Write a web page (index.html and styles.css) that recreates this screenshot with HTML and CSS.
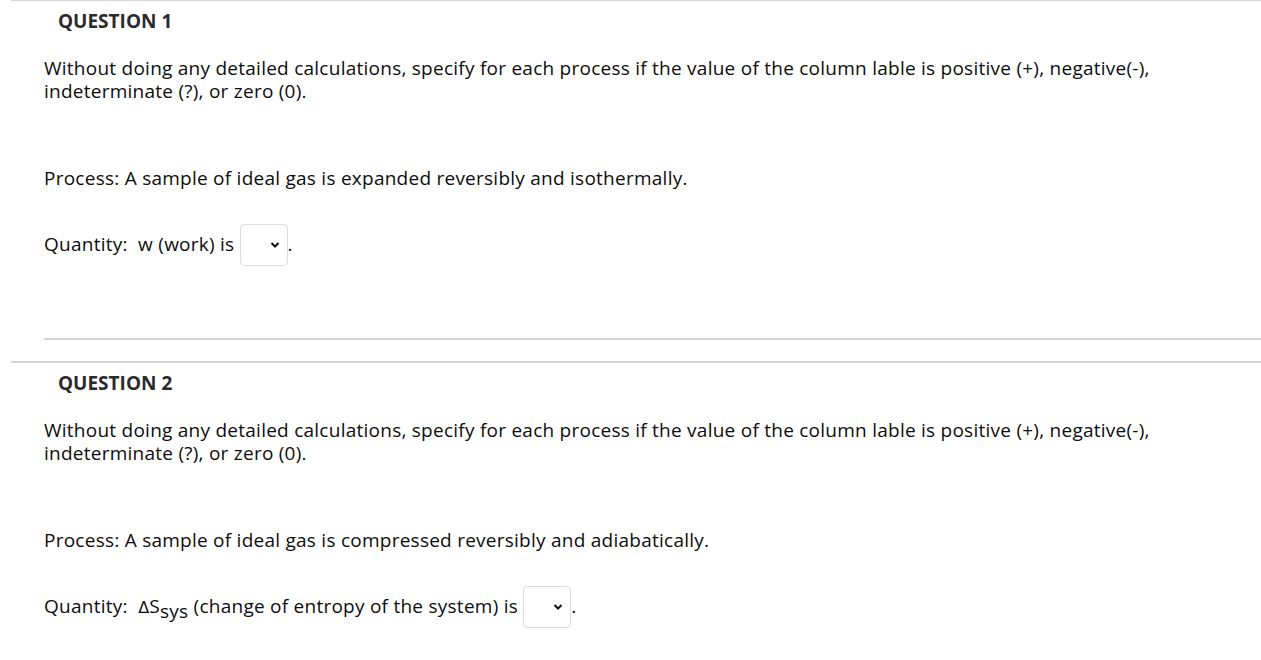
FILE: index.html
```html
<!DOCTYPE html>
<html lang="en">
<head>
<meta charset="utf-8">
<title>Questions</title>
<link rel="stylesheet" href="styles.css">
</head>
<body>
<div class="questions">
  <section class="question">
    <h2 class="q-title">QUESTION 1</h2>
    <div class="q-body">
      <p class="prompt">Without doing any detailed calculations, specify for each process if the value of the column lable is positive (+), negative(-), indeterminate (?), or zero (0).</p>
      <p class="process">Process: A sample of ideal gas is expanded reversibly and isothermally.</p>
      <p class="quantity">Quantity:&nbsp; w (work) is <span class="select"><svg width="10" height="8" viewBox="0 0 10 8"><path d="M1.5 2 L5 5.5 L8.5 2" fill="none" stroke="#111" stroke-width="2"/></svg></span>.</p>
    </div>
    <hr class="q-rule">
  </section>
  <section class="question">
    <h2 class="q-title">QUESTION 2</h2>
    <div class="q-body">
      <p class="prompt">Without doing any detailed calculations, specify for each process if the value of the column lable is positive (+), negative(-), indeterminate (?), or zero (0).</p>
      <p class="process">Process: A sample of ideal gas is compressed reversibly and adiabatically.</p>
      <p class="quantity">Quantity:&nbsp; <span class="delta">Δ</span>S<sub>sys</sub> (change of entropy of the system) is <span class="select"><svg width="10" height="8" viewBox="0 0 10 8"><path d="M1.5 2 L5 5.5 L8.5 2" fill="none" stroke="#111" stroke-width="2"/></svg></span>.</p>
    </div>
  </section>
</div>
</body>
</html>
```
FILE: styles.css
```css
html, body {
  margin: 0;
  padding: 0;
  background: #fff;
}
body {
  font-family: "Open Sans", "Liberation Sans", sans-serif;
  color: #0d0d0d;
  overflow: hidden;
}
.questions {
  margin-left: 11px;
}
.question {
  border-top: 2px solid #d4d4d4;
  padding-bottom: 21px;
}
.question:first-child {
  border-top-width: 1px;
}
.q-title {
  margin: 0;
  padding: 8px 0 0 47px;
  font-size: 19px;
  font-weight: 700;
  line-height: 24px;
  color: #2b2b2b;
}
.q-body {
  padding-left: 33px;
  font-size: 19px;
  letter-spacing: 0.25px;
  line-height: 23px;
}
.prompt {
  margin: 24px 0 0;
  padding-right: 100px;
}
.process {
  margin: 64px 0 0;
}
.quantity {
  margin: 33px 0 0;
  height: 43px;
  line-height: 43px;
  white-space: pre;
}
.select {
  display: inline-flex;
  align-items: center;
  justify-content: flex-end;
  vertical-align: middle;
  box-sizing: border-box;
  width: 48px;
  height: 42px;
  border: 1px solid #dcdcdc;
  border-radius: 4px;
  margin-left: 0;
  padding-right: 7px;
  position: relative;
  top: -1px;
}
.delta {
  font-family: "DejaVu Sans", sans-serif;
  font-size: 16px;
  margin-left: 0;
}
sub {
  font-size: 19px;
  vertical-align: -5px;
  line-height: 0;
}
.q-rule {
  margin: 72px 0 0 33px;
  border: 0;
  border-top: 2px solid #d4d4d4;
  height: 0;
}
```
